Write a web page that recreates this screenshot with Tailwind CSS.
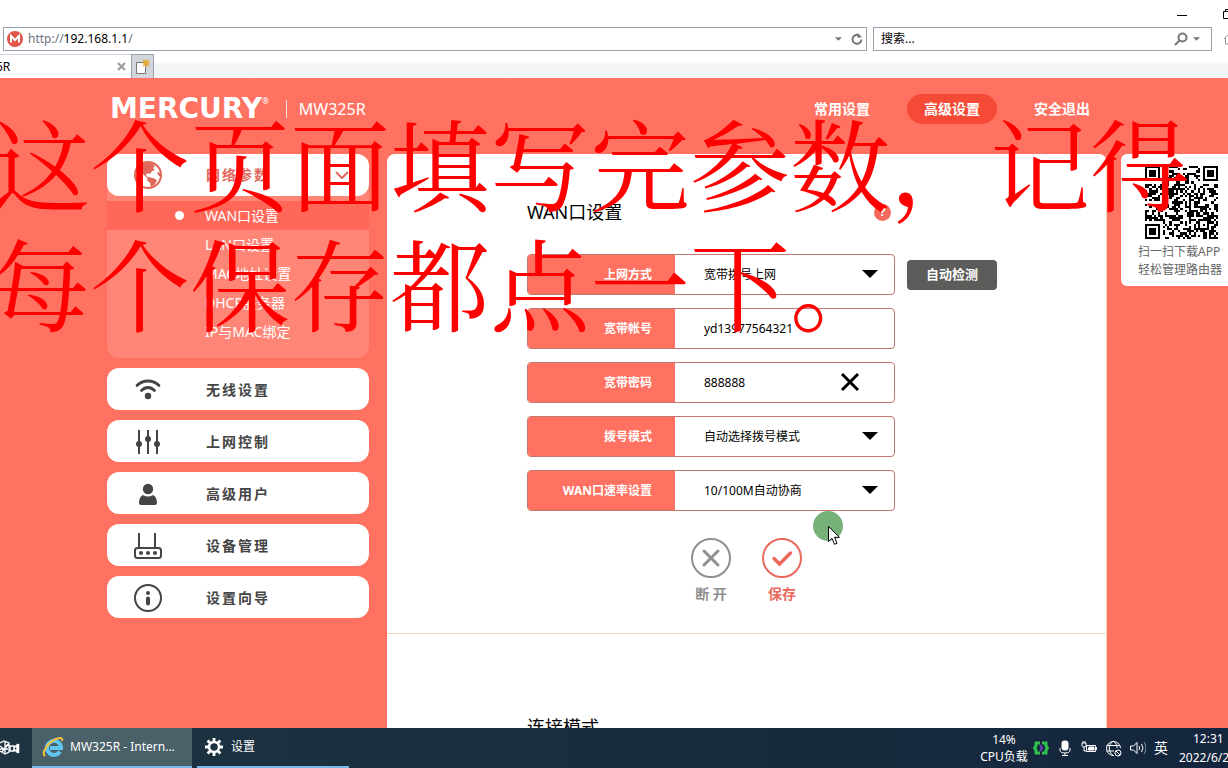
<!DOCTYPE html>
<html lang="zh-CN">
<head>
  <meta charset="UTF-8" />
  <meta name="viewport" content="width=device-width, initial-scale=1.0"/>
  <title>MW325R</title>
  <script src="https://cdn.jsdelivr.net/npm/@tailwindcss/browser@4"></script>
  <style>
    body {
      font-family: 'Noto Sans', 'Noto Sans CJK SC', sans-serif;
    }
  </style>
</head>
<body class="relative h-screen flex flex-col overflow-hidden bg-white text-xs text-black">

  <!-- Browser bar -->
  <header class="shrink-0 bg-white">
    <div class="h-[27px] flex items-center justify-end gap-9 overflow-hidden">
      <button aria-label="最小化" class="w-[10px] h-px mt-1 bg-black"></button>
      <button aria-label="还原" class="w-[5px] h-[14px] overflow-hidden">
        <svg class="w-3 h-3" viewBox="0 0 12 12" fill="none" stroke="#000"><path d="M.5 3.500h8v7h-8zM2.500 3.500v-2h9v8h-3"/></svg>
      </button>
    </div>
    <div class="flex items-center pl-[3px]">
      <div class="flex-1 h-6 flex items-center border border-gray-400 px-[3px] gap-[5px]">
        <svg class="w-4 h-4" viewBox="0 0 16 16"><circle cx="8" cy="8" r="8" fill="#e2574c"/><path d="M4 11.500V5l4 4 4-4v6.500" fill="none" stroke="#fff" stroke-width="2"/></svg>
        <span class="flex-1 text-xs text-gray-500">http://<span class="text-black">192.168.1.1</span>/</span>
        <svg class="w-[7px] h-1 mr-1" viewBox="0 0 8 4"><path d="M0 0h8L4 4z" fill="#777"/></svg>
        <button aria-label="刷新">
          <svg class="w-3 h-3" viewBox="0 0 12 12"><path d="M10.500 6.500a4.500 4.500 0 1 1-3-4.500" fill="none" stroke="#777" stroke-width="2"/><path d="M6.500 0v5l4.500-1z" fill="#777"/></svg>
        </button>
      </div>
      <div class="ml-[6px] w-[339px] h-6 flex items-center border border-gray-400 px-[7px]">
        <input aria-label="搜索" value="搜索..." class="flex-1 min-w-0 outline-none text-xs">
        <svg class="w-[14px] h-[14px]" viewBox="0 0 14 14" fill="none" stroke="#777" stroke-width="2"><circle cx="8.500" cy="5.500" r="4"/><path d="M5.500 8.500L1 13"/></svg>
        <svg class="ml-[5px] w-[7px] h-1 mr-1" viewBox="0 0 8 4"><path d="M0 0h8L4 4z" fill="#777"/></svg>
      </div>
      <svg class="ml-3 w-1 h-4" viewBox="0 0 4 16" fill="none" stroke="#999"><path d="M0 8l4-4M1.500 7v6h3"/></svg>
    </div>
    <div class="h-[27px] pt-[3px] flex bg-linear-to-b from-white from-40% to-gray-100 to-50%">
      <div class="w-[131px] flex items-center justify-between border-t border-gray-300 bg-white pr-[5px]">
        <span class="w-4 h-4 -ml-1 leading-4">5R</span>
        <button aria-label="关闭标签页">
          <svg class="w-[9px] h-[9px]" viewBox="0 0 9 9" stroke="#999" stroke-width="2"><path d="M1 1l7 7M8 1L1 8"/></svg>
        </button>
      </div>
      <button aria-label="新建标签页" class="w-[23px] flex items-center justify-center border border-b-0 border-gray-400 bg-gray-300">
        <svg class="w-[15px] h-4" viewBox="0 0 15 16"><path d="M1.500 3.500h9v11h-9z" fill="#fff" stroke="#777"/><path d="M11 0v8M7 4h8M8 1l6 6M14 1L8 7" stroke="#eba62c" stroke-width="1.200"/></svg>
      </button>
    </div>
  </header>

  <!-- Router admin page -->
  <main class="flex-1 min-h-0 flex flex-col overflow-hidden bg-[#ff7262]">
    <div class="h-[76px] shrink-0 flex items-center justify-between pl-[110px] pr-[121px] pb-[14px]">
      <div class="flex items-center text-white">
        <h1 class="font-['DejaVu_Sans'] text-[28px] leading-8 font-bold">MERCURY</h1>
        <span class="self-start text-[8px] leading-4">®</span>
        <span class="ml-[17px] h-[18px] w-px bg-white/80"></span>
        <span class="ml-3 text-base leading-8">MW325R</span>
      </div>
      <nav class="flex items-center gap-5 text-sm font-bold text-white">
        <a href="#" class="w-[90px] leading-[30px] text-center">常用设置</a>
        <a href="#" class="w-[90px] leading-[30px] text-center rounded-full bg-[#f54b36]">高级设置</a>
        <a href="#" class="w-[90px] leading-[30px] text-center">安全退出</a>
      </nav>
    </div>

    <div class="flex-1 min-h-0 flex items-start pl-[107px]">
      <aside class="w-[262px] shrink-0 flex flex-col gap-[10px] text-sm font-bold text-[#444] tracking-[2px]">
        <div class="rounded-xl bg-[#ff8577]">
          <button class="w-full h-[42px] flex items-center rounded-xl bg-white pl-[27px] pr-5 text-[#e2685c] tracking-[2px]">
            <svg class="w-7 h-7" viewBox="0 0 28 28"><circle cx="14" cy="14" r="13" fill="none" stroke="#e2685c" stroke-width="2"/><path d="M10 2l8 0 3 3-2 2 2 2-3 1-2 3-3-1-1 3 3 2-2 0-4-4-1-4-5-2 2-3zM14 16l5 1 4 2-2 4-4 4-1-5-3-3zM23 11l4 1v4l-3-2z" fill="#e2685c"/></svg>
            <span class="ml-11 flex-1 text-left">网络参数</span>
            <svg class="w-[14px] h-2" viewBox="0 0 14 8" fill="none" stroke="#e2685c" stroke-width="2"><path d="M1 1l6 6 6-6"/></svg>
          </button>
          <ul class="pt-[5px] pb-3 text-sm leading-[29px] font-normal tracking-normal text-white">
            <li class="bg-[#ff6759] flex items-center pl-[68px]"><span class="w-[9px] h-[9px] rounded-full bg-white mr-[21px]"></span><a href="#">WAN口设置</a></li>
            <li class="pl-[98px]"><a href="#">LAN口设置</a></li>
            <li class="pl-[98px]"><a href="#">MAC地址设置</a></li>
            <li class="pl-[98px]"><a href="#">DHCP服务器</a></li>
            <li class="pl-[98px]"><a href="#">IP与MAC绑定</a></li>
          </ul>
        </div>
        <button class="h-[42px] flex items-center gap-11 rounded-xl bg-white pl-[27px] pt-px tracking-[2px]">
          <svg class="w-7 h-7" viewBox="0 0 28 28" fill="none" stroke="#444" stroke-width="2.800" stroke-linecap="round"><path d="M3 9.500c6-6 16-6 22 0M7.500 14.500c4-4 9-4 13 0"/><circle cx="14" cy="20" r="3.200" fill="#444" stroke="none"/></svg>
          无线设置
        </button>
        <button class="h-[42px] flex items-center gap-11 rounded-xl bg-white pl-[27px] pt-px tracking-[2px]">
          <svg class="w-7 h-7" viewBox="0 0 28 28" fill="#444" stroke="#444" stroke-width="2"><path d="M5 2v24M14 2v24M23 2v24"/><circle cx="5" cy="16" r="2"/><circle cx="14" cy="11" r="2"/><circle cx="23" cy="16" r="2"/></svg>
          上网控制
        </button>
        <button class="h-[42px] flex items-center gap-11 rounded-xl bg-white pl-[27px] pt-px tracking-[2px]">
          <svg class="w-7 h-7" viewBox="0 0 28 28" fill="#444"><circle cx="14" cy="9" r="5.200"/><path d="M9 15q5 3 10 0q4 2 4 8q0 2-2 2H7q-2 0-2-2q0-6 4-8z"/></svg>
          高级用户
        </button>
        <button class="h-[42px] flex items-center gap-11 rounded-xl bg-white pl-[27px] pt-px tracking-[2px]">
          <svg class="w-7 h-7" viewBox="0 0 28 28" fill="none" stroke="#444" stroke-width="2"><path d="M5 1v15M21 1v15"/><rect x="1" y="16" width="26" height="10" rx="2.500"/><g fill="#444" stroke="none"><circle cx="7" cy="21" r="2"/><circle cx="14" cy="21" r="2"/><circle cx="21" cy="21" r="2"/></g></svg>
          设备管理
        </button>
        <button class="h-[42px] flex items-center gap-11 rounded-xl bg-white pl-[27px] pt-px tracking-[2px]">
          <svg class="w-7 h-7" viewBox="0 0 28 28" fill="none" stroke="#444" stroke-width="2"><circle cx="14" cy="14" r="13"/><circle cx="14" cy="9" r="2" fill="#444" stroke="none"/><path d="M14 14.500v5" stroke-width="4" stroke-linecap="round"/></svg>
          设置向导
        </button>
      </aside>

      <section class="ml-[18px] flex-1 rounded-t-lg border-r border-orange-200 bg-white">
        <div class="pl-[140px] pt-11 pb-[29px] border-b border-[#f0d8c0]">
          <div class="w-[364px] flex items-center justify-between">
            <h2 class="text-lg leading-7">WAN口设置</h2>
            <button aria-label="帮助" class="w-[17px] h-[17px] rounded-full bg-[#f4695c] text-white text-xs leading-4 font-bold">?</button>
          </div>

          <form class="mt-7 flex flex-col gap-[13px]">
            <div class="flex items-center gap-3">
              <div class="relative w-[368px] h-[41px] flex border border-[#c4776c] rounded bg-white overflow-hidden">
                <label for="mode" class="w-[147px] bg-[#ff7262] pr-[23px] text-right leading-[39px] font-bold text-white">上网方式</label>
                <select id="mode" class="flex-1 appearance-none pl-[29px] outline-none"><option>宽带拨号上网</option></select>
                <svg class="absolute right-4 top-[15px] w-4 h-2 pointer-events-none" viewBox="0 0 16 8"><path d="M0 0h16L8 8z"/></svg>
              </div>
              <button type="button" class="w-[90px] h-[30px] rounded bg-[#5c5c5a] text-[13px] font-bold text-white">自动检测</button>
            </div>
            <div class="w-[368px] h-[41px] flex border border-[#c4776c] rounded bg-white overflow-hidden">
              <label for="account" class="w-[147px] bg-[#ff7262] pr-[23px] text-right leading-[39px] font-bold text-white">宽带帐号</label>
              <input id="account" value="yd13977564321" class="flex-1 min-w-0 pl-[29px] outline-none">
            </div>
            <div class="relative w-[368px] h-[41px] flex border border-[#c4776c] rounded bg-white overflow-hidden">
              <label for="password" class="w-[147px] bg-[#ff7262] pr-[23px] text-right leading-[39px] font-bold text-white">宽带密码</label>
              <input id="password" value="888888" class="flex-1 min-w-0 pl-[29px] outline-none">
              <button type="button" aria-label="清除" class="absolute right-[34px] top-[9px]">
                <svg class="w-5 h-5" viewBox="0 0 20 20" stroke="#000" stroke-width="3"><path d="M2 2l16 16M18 2L2 18"/></svg>
              </button>
            </div>
            <div class="relative w-[368px] h-[41px] flex border border-[#c4776c] rounded bg-white overflow-hidden">
              <label for="dial" class="w-[147px] bg-[#ff7262] pr-[23px] text-right leading-[39px] font-bold text-white">拨号模式</label>
              <select id="dial" class="flex-1 appearance-none pl-[29px] outline-none"><option>自动选择拨号模式</option></select>
              <svg class="absolute right-4 top-[15px] w-4 h-2 pointer-events-none" viewBox="0 0 16 8"><path d="M0 0h16L8 8z"/></svg>
            </div>
            <div class="relative w-[368px] h-[41px] flex border border-[#c4776c] rounded bg-white overflow-hidden">
              <label for="speed" class="w-[147px] bg-[#ff7262] pr-[23px] text-right leading-[39px] font-bold text-white">WAN口速率设置</label>
              <select id="speed" class="flex-1 appearance-none pl-[29px] outline-none"><option>10/100M自动协商</option></select>
              <svg class="absolute right-4 top-[15px] w-4 h-2 pointer-events-none" viewBox="0 0 16 8"><path d="M0 0h16L8 8z"/></svg>
            </div>

            <div class="mt-[14px] pl-[164px] flex gap-[31px] text-sm font-bold">
              <button type="button" class="w-10 flex flex-col items-center gap-[6px] text-[#8f8f8f] whitespace-nowrap">
                <svg class="w-10 h-10" viewBox="0 0 40 40" fill="none" stroke="currentColor" stroke-width="2"><circle cx="20" cy="20" r="19"/><path d="M13 13l14 14M27 13L13 27" stroke-width="3" stroke-linecap="round"/></svg>
                断 开
              </button>
              <button type="button" class="w-10 flex flex-col items-center gap-[6px] text-[#ea695c] whitespace-nowrap">
                <svg class="w-10 h-10" viewBox="0 0 40 40" fill="none" stroke="currentColor" stroke-width="2"><circle cx="20" cy="20" r="19"/><path d="M12 20.500l5.500 5.500L28.500 15" stroke-width="3.500" stroke-linecap="round"/></svg>
                保存
              </button>
            </div>
          </form>
        </div>
        <div class="pl-[140px] pt-[79px] pb-20">
          <h2 class="text-lg leading-7">连接模式</h2>
        </div>
      </section>

      <div class="ml-[14px] w-[107px] shrink-0 h-[132px] rounded-l-md bg-white pt-3 pl-[17px] leading-[18px] text-[#666] whitespace-nowrap">
        <svg class="ml-[7px] mb-1 w-[73px] h-[73px]" viewBox="0 0 33 33" shape-rendering="crispEdges"><path id="qr"/></svg>
        <p>扫一扫下载APP</p>
        <p>轻松管理路由器</p>
      </div>
    </div>
  </main>

  <!-- Taskbar -->
  <footer class="h-10 shrink-0 flex items-stretch overflow-hidden bg-linear-to-r from-[#1e3440] to-[#14263d] text-white">
    <div class="w-8 flex items-center">
      <svg class="w-5 h-4" viewBox="0 0 20 16" fill="none" stroke="#fff"><path d="M0 3l4-2 5 2v9l-4 2-5-3M0 6l4 3 5-5M2 12l6-8M0 9h8M5 2v11" stroke-width="1.300"/><path d="M10 6h4v5h-4zM14 8l3-3v7l-3-3M18.500 4v9" stroke-width="1.500"/></svg>
    </div>
    <button class="w-40 flex items-center gap-[6px] border-b-2 border-[#76b9ed] bg-[#4b616a] pl-[10px]">
      <svg class="w-[22px] h-[22px]" viewBox="0 0 22 22" fill="none"><path d="M18 15.500A7 7 0 1 1 19 12H8" stroke="#62c6f2" stroke-width="4"/><path d="M3 20C-1 17 6 6 14 3c5-2 7-1 6 2" stroke="#f0c53a" stroke-width="2"/></svg>
      MW325R - Intern...
    </button>
    <button class="ml-[5px] w-[152px] flex items-center gap-2 border-b-2 border-[#76b9ed] pl-2">
      <svg class="w-[18px] h-[18px]" viewBox="0 0 18 18" fill="none" stroke="#fff"><circle cx="9" cy="9" r="5" stroke-width="2.500"/><path d="M9 0v4M9 14v4M0 9h4M14 9h4M2.600 2.600l3 3M12.400 12.400l3 3M15.400 2.600l-3 3M5.600 12.400l-3 3" stroke-width="2.800"/></svg>
      设置
    </button>
    <div class="ml-auto flex items-center whitespace-nowrap">
      <p class="w-12 text-center leading-[17px]">14%<br>CPU负载</p>
      <svg class="ml-[5px] w-4 h-4" viewBox="0 0 16 16" fill="none" stroke="#2fc24f" stroke-width="3"><path d="M7 3H3v3L1.500 8 3 10v3h4M9 3h4v3l1.500 2-1.500 2v3H9"/><path d="M7 5l2 3-2 3" stroke="#7040b8" stroke-width="2"/></svg>
      <svg class="ml-2 w-4 h-4" viewBox="0 0 16 16" fill="none" stroke="#fff"><rect x="5" y="1" width="6" height="9" rx="2" fill="#fff"/><path d="M3 8v2q0 3 5 3t5-3V8M8 13v2M5 15.500h6"/></svg>
      <svg class="ml-2 w-4 h-4" viewBox="0 0 16 16" fill="none" stroke="#fff"><path d="M1 3h4v3q0 1-2 1t-2-1zM2 3V1M4 3V1M3 7v4h2M5.500 5.500h9v6h-9zM15.500 7v3"/><path d="M8 7h5v3H7z" fill="#fff"/></svg>
      <svg class="ml-2 w-[17px] h-[17px]" viewBox="0 0 17 17" fill="none" stroke="#fff"><path d="M9 15.500A7 7 0 1 1 15.500 8M8 1C3 5 3 11 8 15.500M8 1c3 2 4 4 4 7M1.500 5.500h13M1.500 11H9"/><circle cx="13" cy="13" r="3"/><path d="M11 11l4 4"/></svg>
      <svg class="ml-2 w-4 h-4" viewBox="0 0 16 16" fill="none" stroke="#fff"><path d="M.5 6h3L7 2.500v11L3.500 10h-3zM9 6q1.500 2 0 4M11.500 4q3 4 0 8"/><path d="M14 2q4 6 0 12" stroke="#8492a0"/></svg>
      <span class="ml-2 text-sm">英</span>
      <div class="ml-[10px] w-[50px] overflow-hidden leading-[19px]"><p class="pl-[15px]">12:31</p><p class="pl-px">2022/6/2</p></div>
    </div>
  </footer>

  <!-- Subtitle over the recording -->
  <p class="absolute left-[-10px] top-[101px] whitespace-nowrap pointer-events-none font-['Noto_Serif_CJK_SC','Noto_Sans_CJK_SC',serif] font-normal text-[100px] leading-[120px] text-[#f00]">这个页面填写完参数，记得<br>每个保存都点一下。</p>

  <!-- Mouse pointer -->
  <div class="absolute left-[813px] top-[511px] w-[30px] h-[30px] rounded-full bg-[#77b17a] pointer-events-none">
    <svg class="absolute left-[15px] top-[15px] w-3 h-5" viewBox="0 0 12 20"><path d="M.5.5v15l3.500-3.200 2.500 6 2.500-1-2.500-6h5z" fill="#fff" stroke="#000"/></svg>
  </div>

  <script>
    // QR modules: three finder squares, one alignment square, data in between
    const size = 33;
    let seed = 325;
    let d = '';
    const ring = (x, y, n) => {
      const edge = Math.max(Math.abs(x), Math.abs(y));
      return edge === n || edge <= n - 2;
    };
    for (let y = 0; y < size; y++) {
      for (let x = 0; x < size; x++) {
        seed = (seed * 1103515245 + 12345) % 2147483648;
        let on = seed / 2147483648 < 0.5;
        if (x < 8 && y < 8) on = x < 7 && y < 7 && ring(x - 3, y - 3, 3);
        else if (x > 24 && y < 8) on = x > 25 && y < 7 && ring(x - 29, y - 3, 3);
        else if (x < 8 && y > 24) on = x < 7 && y > 25 && ring(x - 3, y - 29, 3);
        else if (Math.abs(x - 26) < 3 && Math.abs(y - 26) < 3) on = ring(x - 26, y - 26, 2);
        if (on) d += `M${x} ${y}h1v1h-1z`;
      }
    }
    document.getElementById('qr').setAttribute('d', d);
  </script>
</body>
</html>
